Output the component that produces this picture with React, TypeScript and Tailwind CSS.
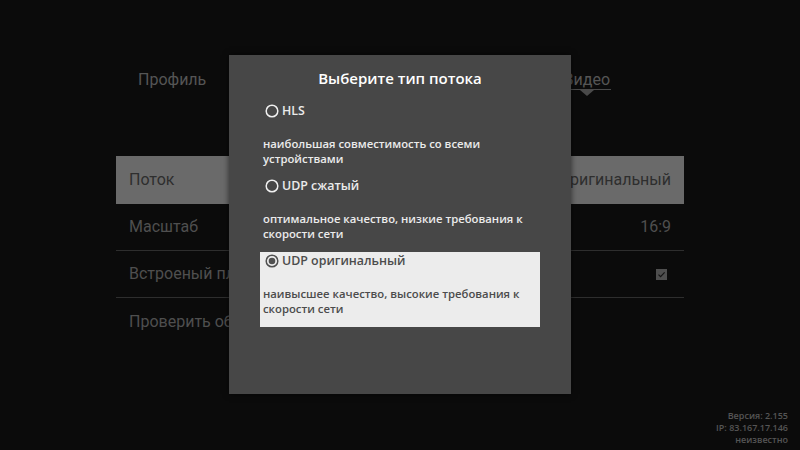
import React from 'react';

const options = [
  { id: 'hls', title: 'HLS', desc: 'наибольшая совместимость со всеми устройствами' },
  { id: 'udpz', title: 'UDP сжатый', desc: 'оптимальное качество, низкие требования к скорости сети' },
  { id: 'udpo', title: 'UDP оригинальный', desc: 'наивысшее качество, высокие требования к скорости сети' },
];

function Radio({ checked }: { checked: boolean }) {
  return (
    <svg width="14" height="14" viewBox="0 0 14 14" className="shrink-0">
      <circle cx="7" cy="7" r="5.8" fill="none" stroke={checked ? '#505050' : '#f0f0f0'} strokeWidth="1.5" />
      {checked && <circle cx="7" cy="7" r="3.3" fill="#505050" />}
    </svg>
  );
}

export default function App() {
  const selected = 'udpo';

  return (
    <div className="relative w-[800px] h-[450px] bg-[#0b0b0b] overflow-hidden font-['Roboto',sans-serif]">
      {/* tabs */}
      <div className="flex pt-[69px] h-[156px] text-[16px] text-[#555555]">
        <div className="ml-[138px] leading-[22px]">Профиль</div>
        <div className="ml-auto mr-[189px] flex flex-col items-center">
          <div className="leading-[22px] px-[1px]">Видео</div>
          <div className="w-full h-px bg-[#4a4a4a] -mt-[2px]" />
          <div className="w-0 h-0 border-l-[7px] border-r-[7px] border-t-[6px] border-l-transparent border-r-transparent border-t-[#4a4a4a]" />
        </div>
      </div>

      {/* settings rows */}
      <div className="ml-[116px] w-[568px] text-[16px]">
        <div className="h-[48px] bg-[#6a6a6a] flex items-center justify-between px-[13px] text-[#2e2e2e]">
          <span>Поток</span>
          <span>UDP оригинальный</span>
        </div>
        <div className="h-[47px] border-b border-[#2e2e2e] flex items-center justify-between px-[13px] text-[#4f4f4f]">
          <span>Масштаб</span>
          <span>16:9</span>
        </div>
        <div className="h-[47px] border-b border-[#2e2e2e] flex items-center justify-between px-[13px] text-[#4f4f4f]">
          <span>Встроеный плеер</span>
          <span className="w-[11px] h-[11px] mr-[4px] bg-[#4f4f4f] flex items-center justify-center">
            <svg width="9" height="9" viewBox="0 0 9 9">
              <path d="M1.5 4.6 L3.6 6.6 L7.6 2.4" fill="none" stroke="#141414" strokeWidth="1.2" />
            </svg>
          </span>
        </div>
        <div className="h-[48px] flex items-center px-[13px] text-[#4f4f4f]">
          <span>Проверить обновления</span>
        </div>
      </div>

      {/* version info */}
      <div className="absolute right-[12px] bottom-[4px] text-right text-[9px] leading-[12px] text-[#555555] font-['Open_Sans',sans-serif] font-semibold">
        <div>Версия: 2.155</div>
        <div>IP: 83.167.17.146</div>
        <div>неизвестно</div>
      </div>

      {/* dialog */}
      <div className="absolute left-[229px] top-[55px] w-[342px] h-[339px] bg-[#474747] shadow-[0_0_6px_rgba(0,0,0,0.6)] font-['Open_Sans',sans-serif]">
        <div className="h-[47px] flex items-center justify-center text-white text-[15px] font-semibold">
          Выберите тип потока
        </div>
        <div className="px-[31px]">
          {options.map((o) => {
            const on = o.id === selected;
            return (
              <div key={o.id} className={`h-[75px] ${on ? 'bg-[#ececec] text-[#4c4c4c]' : 'text-[#ebebeb]'}`}>
                <div className="h-[18px] flex items-center gap-[3px] pl-[5px] text-[12.4px] font-semibold">
                  <Radio checked={on} />
                  <span>{o.title}</span>
                </div>
                <div className="mt-[16px] pl-[3px] pr-[4px] text-[11.3px] leading-[15px] font-semibold">{o.desc}</div>
              </div>
            );
          })}
        </div>
      </div>
    </div>
  );
}
